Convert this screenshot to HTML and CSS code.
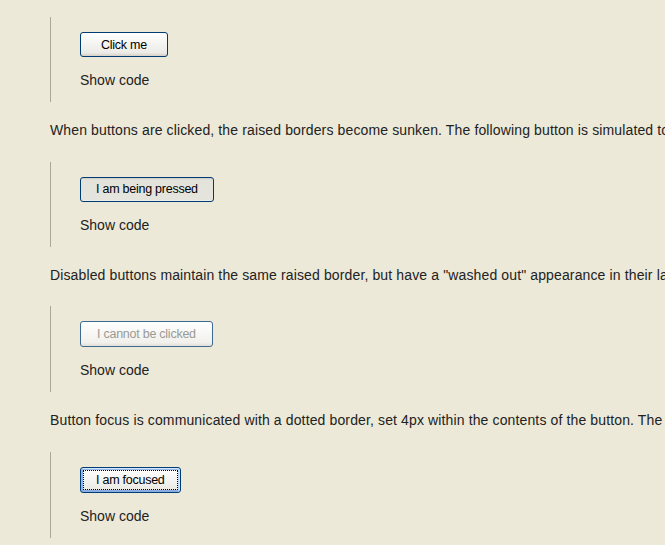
FILE: index.html
```html
<!DOCTYPE html>
<html>
<head>
<meta charset="utf-8">
<link rel="stylesheet" href="styles.css">
</head>
<body>
<main class="page">
  <div class="example">
    <button class="btn">Click me</button>
    <div class="show-code">Show code</div>
  </div>
  <p class="text">When buttons are clicked, the raised borders become sunken. The following button is simulated to be in the pressed (active) state.</p>
  <div class="example">
    <button class="btn btn-active">I am being pressed</button>
    <div class="show-code">Show code</div>
  </div>
  <p class="text">Disabled buttons maintain the same raised border, but have a "washed out" appearance in their label.</p>
  <div class="example">
    <button class="btn" disabled>I cannot be clicked</button>
    <div class="show-code">Show code</div>
  </div>
  <p class="text">Button focus is communicated with a dotted border, set 4px within the contents of the button. The following example is simulated to be focused.</p>
  <div class="example">
    <button class="btn btn-focus">I am focused</button>
    <div class="show-code">Show code</div>
  </div>
</main>
</body>
</html>
```
FILE: styles.css
```css
html, body {
  margin: 0;
  padding: 0;
  background: #ece9d8;
  overflow: hidden;
}
.page {
  padding: 17px 0 0 50px;
  font-family: "Liberation Sans", Arial, sans-serif;
  font-size: 14px;
  line-height: 17px;
  color: #222;
}
.example {
  border-left: 1px solid #aca899;
  padding: 15px 0 13px 29px;
  display: flex;
  flex-direction: column;
  align-items: flex-start;
}
.show-code {
  margin-top: 15px;
  color: #222;
}
.text {
  margin: 20px 0 22.5px;
  white-space: nowrap;
  letter-spacing: 0.13px;
}
.btn {
  font-family: "Liberation Sans", Arial, sans-serif;
  font-size: 12.5px;
  letter-spacing: -0.25px;
  color: #000;
  height: 25px;
  min-width: 88px;
  padding: 0 15px;
  border: 1px solid #003c74;
  border-radius: 3px;
  background: linear-gradient(180deg, #fff, #ecebe6 86%, #d6d0c5);
  box-sizing: border-box;
}
.btn-active {
  background: linear-gradient(180deg, #cdcac3, #e3e3db 8%, #e5e5de 94%, #f2f2f1);
}
.btn:disabled {
  color: #9a9a94;
  border-color: #3d6995;
  padding: 0 16px;
  height: 26px;
  background: linear-gradient(180deg, #fff, #f1f0ec 86%, #e2ded6);
}
.btn-focus {
  height: 26px;
  min-width: 0;
  box-shadow: inset -1px 1px #cee7ff, inset 1px 2px #98b8ea, inset -2px 2px #bcd4f6, inset 1px -1px #89ade4, inset 2px -2px #89ade4;
  outline: 1px dotted #000;
  outline-offset: -4px;
}
```
